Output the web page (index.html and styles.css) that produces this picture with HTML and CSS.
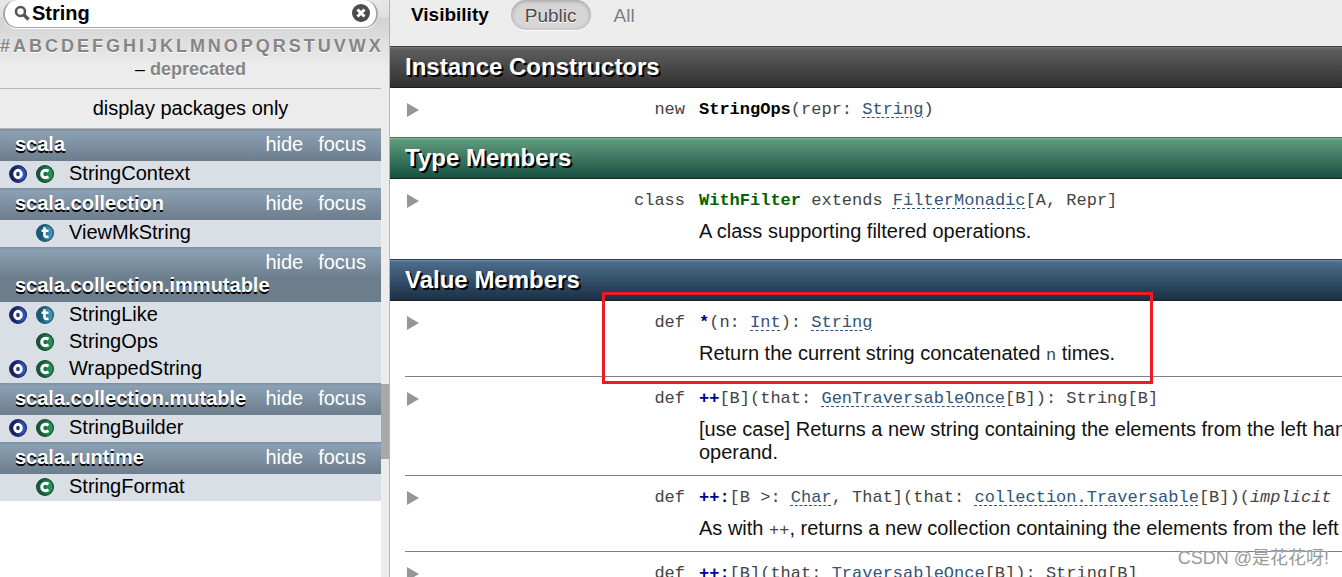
FILE: index.html
```
<!DOCTYPE html>
<html lang="en">
<head>
    <meta charset="UTF-8">
    <meta name="viewport" content="width=device-width, initial-scale=1.0">
    <title>StringOps - Scala Standard Library</title>
    <link rel="stylesheet" href="styles.css">
</head>
<body>
    <!-- badge shapes shared by the entity list -->
    <svg class="defs" aria-hidden="true">
        <defs>
            <linearGradient id="blue" x1="0" x2="1"><stop offset="0.3" stop-color="#14225f"/><stop offset="0.8" stop-color="#2f56b4"/></linearGradient>
            <linearGradient id="green" x1="0" x2="1"><stop offset="0.3" stop-color="#145a37"/><stop offset="0.8" stop-color="#279158"/></linearGradient>
            <linearGradient id="teal" x1="0" x2="1"><stop offset="0.3" stop-color="#1b5a75"/><stop offset="0.8" stop-color="#3d93b5"/></linearGradient>
        </defs>
        <symbol id="object" viewBox="0 0 18 18">
            <circle cx="9" cy="9" r="8.4" fill="url(#blue)" stroke="#1c2c6c" stroke-width="1.2"/>
            <ellipse cx="9" cy="9" rx="3.3" ry="3.7" fill="none" stroke="#fff" stroke-width="3"/>
        </symbol>
        <symbol id="class" viewBox="0 0 18 18">
            <circle cx="9" cy="9" r="8.4" fill="url(#green)" stroke="#134c2e" stroke-width="1.2"/>
            <path d="M12.5 6.2C9 4.200 5.800 5.600 5.800 9s3.200 4.800 6.700 2.800" fill="none" stroke="#fff" stroke-width="3"/>
        </symbol>
        <symbol id="trait" viewBox="0 0 18 18">
            <circle cx="9" cy="9" r="8.4" fill="url(#teal)" stroke="#1c566e" stroke-width="1.2"/>
            <path d="M8.500 3.200V11q0 2.800 4 1.600M5.500 6.700H12.500" fill="none" stroke="#fff" stroke-width="2.600"/>
        </symbol>
    </svg>

    <div class="page">
        <aside class="sidebar">
            <div class="filter">
                <div class="search">
                    <svg class="search-icon" viewBox="0 0 16 16" aria-hidden="true">
                        <circle cx="6.500" cy="6.500" r="4.500" fill="none" stroke="#555" stroke-width="2.600"/>
                        <path d="M10 10l4.500 4.500" stroke="#555" stroke-width="3.400"/>
                    </svg>
                    <input type="text" class="search-input" value="String" aria-label="Search">
                    <button class="clear" aria-label="Clear search">
                        <svg viewBox="0 0 18 18" aria-hidden="true">
                            <circle cx="9" cy="9" r="9" fill="#4c4c4c"/>
                            <path d="M5.500 5.500l7 7M12.500 5.500l-7 7" stroke="#fff" stroke-width="3"/>
                        </svg>
                    </button>
                </div>
                <nav class="letters">
                    <a href="#">#</a><a href="#">A</a><a href="#">B</a><a href="#">C</a><a href="#">D</a><a href="#">E</a><a href="#">F</a><a href="#">G</a><a href="#">H</a><a href="#">I</a><a href="#">J</a><a href="#">K</a><a href="#">L</a><a href="#">M</a><a href="#">N</a><a href="#">O</a><a href="#">P</a><a href="#">Q</a><a href="#">R</a><a href="#">S</a><a href="#">T</a><a href="#">U</a><a href="#">V</a><a href="#">W</a><a href="#">X</a>
                </nav>
                <div class="deprecated">&ndash; <a href="#">deprecated</a></div>
                <button class="packages-only">display packages only</button>
            </div>

            <div class="browser">
                <div class="packages">
                    <section>
                        <header class="pack"><span class="pack-links"><a href="#">hide</a><a href="#">focus</a></span><a class="pack-name" href="#">scala</a></header>
                        <ul>
                            <li><svg class="badge"><use href="#object"/></svg><svg class="badge"><use href="#class"/></svg><a href="#">StringContext</a></li>
                        </ul>
                    </section>
                    <section>
                        <header class="pack"><span class="pack-links"><a href="#">hide</a><a href="#">focus</a></span><a class="pack-name" href="#">scala.collection</a></header>
                        <ul>
                            <li><span class="badge"></span><svg class="badge"><use href="#trait"/></svg><a href="#">ViewMkString</a></li>
                        </ul>
                    </section>
                    <section>
                        <header class="pack"><span class="pack-links"><a href="#">hide</a><a href="#">focus</a></span><a class="pack-name" href="#">scala.collection.immutable</a></header>
                        <ul>
                            <li><svg class="badge"><use href="#object"/></svg><svg class="badge"><use href="#trait"/></svg><a href="#">StringLike</a></li>
                            <li><span class="badge"></span><svg class="badge"><use href="#class"/></svg><a href="#">StringOps</a></li>
                            <li><svg class="badge"><use href="#object"/></svg><svg class="badge"><use href="#class"/></svg><a href="#">WrappedString</a></li>
                        </ul>
                    </section>
                    <section>
                        <header class="pack"><span class="pack-links"><a href="#">hide</a><a href="#">focus</a></span><a class="pack-name" href="#">scala.collection.mutable</a></header>
                        <ul>
                            <li><svg class="badge"><use href="#object"/></svg><svg class="badge"><use href="#class"/></svg><a href="#">StringBuilder</a></li>
                        </ul>
                    </section>
                    <section>
                        <header class="pack"><span class="pack-links"><a href="#">hide</a><a href="#">focus</a></span><a class="pack-name" href="#">scala.runtime</a></header>
                        <ul>
                            <li><span class="badge"></span><svg class="badge"><use href="#class"/></svg><a href="#">StringFormat</a></li>
                        </ul>
                    </section>
                </div>
                <div class="scrollbar"><div class="thumb"></div></div>
            </div>
        </aside>

        <main class="template">
            <div class="visibility">
                <span class="visibility-label">Visibility</span>
                <button class="option selected">Public</button>
                <button class="option">All</button>
            </div>

            <section>
                <h3 class="constructors">Instance Constructors</h3>
                <ol class="members">
                    <li>
                        <span class="arrow"></span>
                        <code class="kind">new</code>
                        <code class="symbol"><b>StringOps</b>(repr: <a href="#">String</a>)</code>
                    </li>
                </ol>
            </section>

            <section>
                <h3 class="types">Type Members</h3>
                <ol class="members">
                    <li>
                        <span class="arrow"></span>
                        <code class="kind">class</code>
                        <code class="symbol"><b class="type-name">WithFilter</b> extends <a href="#">FilterMonadic</a>[A, Repr]</code>
                        <p>A class supporting filtered operations.</p>
                    </li>
                </ol>
            </section>

            <section>
                <h3 class="values">Value Members</h3>
                <ol class="members">
                    <li>
                        <span class="arrow"></span>
                        <code class="kind">def</code>
                        <code class="symbol"><b class="value-name">*</b>(n: <a href="#">Int</a>): <a href="#">String</a></code>
                        <p>Return the current string concatenated <code>n</code> times.</p>
                    </li>
                    <li>
                        <span class="arrow"></span>
                        <code class="kind">def</code>
                        <code class="symbol"><b class="value-name">++</b>[B](that: <a href="#">GenTraversableOnce</a>[B]): String[B]</code>
                        <p>[use case] Returns a new string containing the elements from the left hand<br>operand.</p>
                    </li>
                    <li>
                        <span class="arrow"></span>
                        <code class="kind">def</code>
                        <code class="symbol"><b class="value-name">++:</b>[B &gt;: <a href="#">Char</a>, That](that: <a href="#">collection.Traversable</a>[B])(<i>implicit</i> bf</code>
                        <p>As with <code>++</code>, returns a new collection containing the elements from the left</p>
                    </li>
                    <li>
                        <span class="arrow"></span>
                        <code class="kind">def</code>
                        <code class="symbol"><b class="value-name">++:</b>[B](that: <a href="#">TraversableOnce</a>[B]): String[B]</code>
                    </li>
                </ol>
            </section>

            <div class="highlight"></div>
            <div class="watermark">CSDN @是花花呀!</div>
        </main>
    </div>
</body>
</html>
```

FILE: styles.css
```
* {
    box-sizing: border-box;
}
body {
    margin: 0;
    font-family: "Liberation Sans", Arial, sans-serif;
    font-size: 20px;
    line-height: 23px;
    color: #000;
    background-color: #fff;
}
a {
    color: inherit;
    text-decoration: none;
}
button {
    border: none;
    background: none;
    padding: 0;
    font: inherit;
    cursor: pointer;
}
ul, ol, h3, p {
    margin: 0;
    padding: 0;
    list-style: none;
}
code {
    font-family: "Liberation Mono", "Courier New", monospace;
    font-size: 17px;
}
.defs {
    position: absolute;
    width: 0;
    height: 0;
}
.page {
    display: flex;
    height: 100vh;
    overflow: hidden;
}

/* Left side: filter and package list */
.sidebar {
    flex: none;
    width: 390px;
    display: flex;
    flex-direction: column;
    border-right: 1px solid #b4b4b4;
}
.filter {
    padding-right: 8px;
    text-align: center;
    background: linear-gradient(#e8e8e8 0, #dedede 17px, #d2d2d2 18px, #ececec 66px);
}
.search {
    display: flex;
    align-items: center;
    height: 28px;
    margin: 0 3px;
    padding: 0 6px 1px 9px;
    border: 2px solid #a4a4a4;
    border-top-width: 0;
    border-bottom-width: 1px;
    border-radius: 14px;
    background-color: #fff;
    box-shadow: 0 1px 0 #fff;
}
.search-icon {
    width: 16px;
    height: 16px;
}
.search-input {
    flex: 1;
    min-width: 0;
    padding: 0 2px;
    border: none;
    outline: none;
    background: none;
    font: inherit;
    font-weight: bold;
}
.clear, .clear svg {
    display: block;
    width: 18px;
    height: 18px;
}
.letters {
    display: flex;
    justify-content: space-between;
    padding-top: 7px;
}
.letters, .deprecated {
    font-size: 18px;
    text-shadow: 0 1px 0 #fff;
}
.letters a, .deprecated a {
    font-weight: bold;
    color: #858585;
}
.deprecated {
    padding-bottom: 7px;
    border-bottom: 1px solid #b4b4b4;
}
.packages-only {
    display: block;
    width: 100%;
    padding: 8px 0;
    border-bottom: 1px solid #b4b4b4;
    color: #000;
}
.browser {
    flex: 1;
    display: flex;
}
.packages {
    flex: 1;
}
.pack {
    padding: 4px 15px 5px;
    color: #fff;
    background: linear-gradient(#7c90a3 0, #8ba0b3 3px, #6c7d8c 32px);
}
.pack-links {
    float: right;
    display: flex;
    gap: 15px;
}
.pack-name {
    font-weight: bold;
    text-shadow: 0 2px 0 #000;
}
.packages li {
    display: flex;
    align-items: center;
    gap: 9px;
    height: 27px;
    padding: 0 0 2px 9px;
    background-color: #dadfe6;
}
.packages li a {
    padding-left: 6px;
}
.badge {
    width: 18px;
    height: 18px;
}
.scrollbar {
    width: 8px;
    padding-top: 255px;
    background-color: #ececec;
}
.thumb {
    height: 75px;
    background-color: #a9a9a9;
}

/* Right side: members of the class */
.template {
    position: relative;
    flex: 1;
    min-width: 0;
    overflow: hidden;
}
.visibility {
    display: flex;
    align-items: flex-start;
    height: 46px;
    padding-left: 21px;
    font-size: 19px;
    background-color: #ececec;
}
.visibility-label {
    padding-top: 3px;
    margin-right: 22px;
    font-weight: bold;
    text-shadow: 0 1px 0 #fff;
}
.option {
    height: 30px;
    padding: 0 14px;
    color: #7c7c7c;
    text-shadow: 0 1px 0 #fff;
}
.option.selected {
    margin-right: 9px;
    border-radius: 15px;
    color: #4c4c4c;
    background-color: #d6d6d6;
    box-shadow: inset 0 1px 4px #999, 0 1px 1px #fff;
}
h3 {
    height: 42px;
    padding: 8px 15px;
    border-top: 1px solid;
    border-bottom: 1px solid #222;
    font-size: 24px;
    line-height: 24px;
    color: #fff;
    text-shadow: 2px 2px 0 #000;
}
.constructors {
    border-top-color: #404040;
    background: linear-gradient(#7a7a7a 0, #5e5e5e 2px, #303030 100%);
}
.types {
    border-top-color: #38804f;
    background: linear-gradient(#86b899 0, #5f9a7c 2px, #174f42 100%);
}
.values {
    border-top-color: #2b4059;
    background: linear-gradient(#7590ab 0, #4c6c8b 2px, #1a3045 100%);
}
.members {
    padding: 0 0 5px 15px;
}
.members li {
    display: grid;
    grid-template-columns: 20px 260px 1fr;
    row-gap: 8px;
    padding: 10px 0 11px;
    white-space: nowrap;
}
.members li + li {
    border-top: 1px solid #808080;
}
.arrow {
    width: 12px;
    height: 14px;
    margin: 5px 0 0 2px;
    background-color: #969696;
    clip-path: polygon(0 0, 100% 50%, 0 100%);
}
.kind {
    text-align: right;
    color: #444;
}
.symbol {
    padding-left: 14px;
    color: #444;
}
.symbol b {
    color: #000;
}
.symbol .type-name {
    color: #006400;
}
.symbol .value-name {
    color: #00008b;
}
.symbol a {
    color: #315479;
    text-decoration: underline dashed 1px;
    text-underline-offset: 3px;
}
.members p {
    grid-column: 3;
    padding-left: 14px;
    color: #111;
}
.members p code {
    line-height: 1;
    color: #444;
}

/* Marker drawn over the first value member */
.highlight {
    position: absolute;
    top: 292px;
    left: 212px;
    width: 551px;
    height: 92px;
    border: 3px solid #ed1c24;
}
.watermark {
    position: absolute;
    right: 13px;
    bottom: 7px;
    font-family: "Liberation Sans", "Noto Sans CJK SC", sans-serif;
    font-size: 18px;
    color: #999;
    text-shadow: 0 0 1px #fff;
}
```
